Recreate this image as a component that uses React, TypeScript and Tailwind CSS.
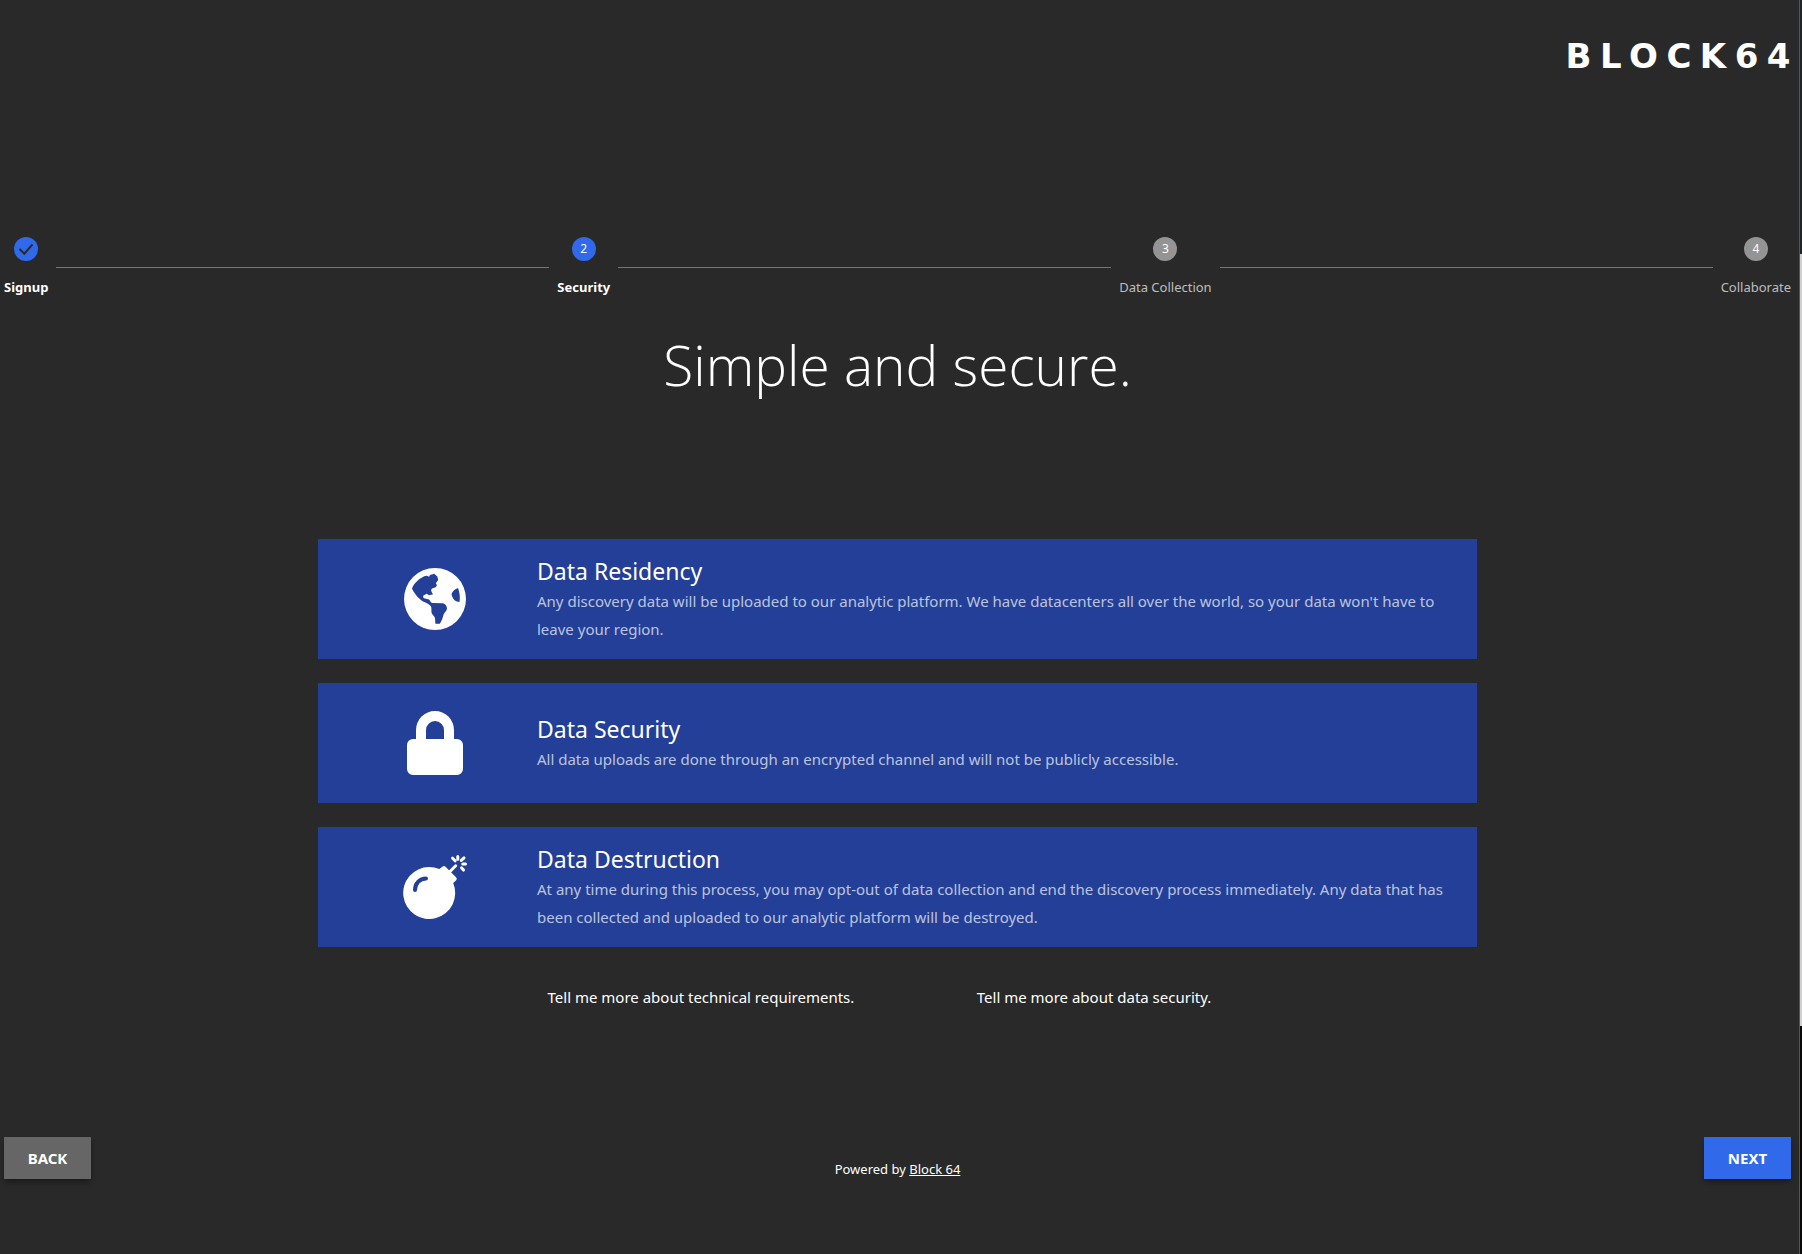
import { Fragment, useState } from "react";

type IconProps = {
  className?: string;
};

function GlobeIcon({ className }: IconProps) {
  return (
    <svg viewBox="0 0 62 62" className={className} fill="currentColor" aria-hidden="true">
      <path
        fillRule="evenodd"
        d="M31 0a31 31 0 1 0 0 62a31 31 0 1 0 0-62Z
        M8 20.700C9 17 11 15 13.500 12.800C16.500 10 19.500 8.300 22.600 7.800L25.300 8.800C25.500 7 26.500 6.300 28 6.500L30.200 5.800L33.300 8.400C33.400 10 34.500 10.500 34 12.300L31.800 15.300L33 17.200L31.600 19.300C30 20 28.200 20 27.400 21.200C26.600 22.500 27.800 24.500 29.100 26.200L25 27.200L22.800 25.800L19.400 27.500C18.600 29.200 19.500 30.400 21 30.400L25 31.500C26.500 32.500 26.200 34.500 28 34.900L39 35.200C41.500 36 43 38 43 40.800C42.400 43.500 40.600 44.500 39.600 46.500C38.800 50 37.500 53.500 35.800 55.700H31.400L31 50C30.200 47.800 28 46.500 27.500 44.500L27.300 39.300C26.600 37.200 25 36.200 22.500 34.900C16.500 32.800 12 28.200 8 20.700Z
        M54 20C51 20.800 48.700 23.200 47.500 26.300C48 29.500 50 32.500 52.800 33.600L55.500 33.900C56.400 29 55.500 24 54 20Z"
      />
    </svg>
  );
}

function LockIcon({ className }: IconProps) {
  return (
    <svg viewBox="0 0 64 64" className={className} fill="currentColor" aria-hidden="true">
      <path d="M13 28V19a19 19 0 0 1 38 0v9h3a6 6 0 0 1 6 6v24a6 6 0 0 1-6 6H10a6 6 0 0 1-6-6V34a6 6 0 0 1 6-6ZM23 28H41V19a9 9 0 0 0-18 0Z" />
    </svg>
  );
}

function BombIcon({ className }: IconProps) {
  return (
    <svg viewBox="0 0 64 64" className={className} fill="none" aria-hidden="true">
      <path
        fill="currentColor"
        d="M26 12c3.700 0 7.200.8 10.400 2.100l2.900-2.300a2.500 2.500 0 0 1 3.500.2l10 10a2.500 2.500 0 0 1 .2 3.500L50.200 28A26 26 0 1 1 26 12Z"
      />
      <path d="M12 35c0-6.500 4.500-11.500 11-11.500" className="stroke-[#233f97]" strokeWidth="4" strokeLinecap="round" />
      <path
        stroke="currentColor"
        strokeWidth="3"
        strokeLinecap="round"
        d="M45.500 18l7.200-7.200M54.800 1.500v2.800M61 2.900l-2.700 2.500M59.800 9h2.700M58.500 12.800l2 2.300M49.600 3.200l2.500 2.600"
      />
    </svg>
  );
}

const steps = ["Signup", "Security", "Data Collection", "Collaborate"];

const features = [
  {
    title: "Data Residency",
    text: "Any discovery data will be uploaded to our analytic platform. We have datacenters all over the world, so your data won't have to leave your region.",
    icon: <GlobeIcon className="size-[62px]" />,
  },
  {
    title: "Data Security",
    text: "All data uploads are done through an encrypted channel and will not be publicly accessible.",
    icon: <LockIcon className="size-16" />,
  },
  {
    title: "Data Destruction",
    text: "At any time during this process, you may opt-out of data collection and end the discovery process immediately. Any data that has been collected and uploaded to our analytic platform will be destroyed.",
    icon: <BombIcon className="size-16" />,
  },
];

function Stepper({ current }: { current: number }) {
  return (
    <ol className="flex items-center gap-2">
      {steps.map((label, index) => (
        <Fragment key={label}>
          {index > 0 ? <li aria-hidden="true" className="h-px flex-1 bg-[#757575]" /> : null}
          <li className="flex flex-col items-center gap-4">
            <span
              className={
                index <= current
                  ? "flex size-6 items-center justify-center rounded-full bg-[#3069ea] text-xs"
                  : "flex size-6 items-center justify-center rounded-full bg-[#949494] text-xs"
              }
            >
              {index < current ? (
                <svg viewBox="0 0 24 24" className="size-6" fill="none" aria-label="Done">
                  <path d="M5.500 12l4.800 4.700L18.500 7.300" className="stroke-[#292929]" strokeWidth="2" />
                </svg>
              ) : (
                index + 1
              )}
            </span>
            <span
              className={
                index <= current ? "text-[13px] leading-5 font-bold" : "text-[13px] leading-5 text-white/70"
              }
            >
              {label}
            </span>
          </li>
        </Fragment>
      ))}
    </ol>
  );
}

export default function App() {
  const [current, setCurrent] = useState(1);

  return (
    <div className="flex min-h-screen bg-[#292929] font-['Noto_Sans','Open_Sans',sans-serif] text-white">
      <div className="flex flex-1 flex-col pr-2 pl-1">
        <header className="flex h-[237px] justify-end pt-9">
          <a
            href="#home"
            className="-mr-2 h-10 font-['DejaVu_Sans',sans-serif] text-[34px] leading-10 font-bold tracking-[0.25em]"
          >
            BLOCK64
          </a>
        </header>

        <Stepper current={current} />

        <main className="flex flex-col items-center">
          <h1 className="mt-6 font-['Open_Sans','Noto_Sans',sans-serif] text-[55px] leading-[88px] font-light">
            Simple and secure.
          </h1>

          <div className="mt-[130px] flex w-full max-w-[1159px] flex-col gap-6">
            {features.map((feature) => (
              <section key={feature.title} className="flex min-h-[120px] items-center bg-[#233f97] pr-5 pl-[85px]">
                <div className="flex w-16 shrink-0 justify-center">{feature.icon}</div>
                <div className="ml-[70px]">
                  <h2 className="text-[23px] leading-8">{feature.title}</h2>
                  <p className="text-[15px] leading-7 text-white/70">{feature.text}</p>
                </div>
              </section>
            ))}
          </div>

          <nav className="mt-9 grid w-[44%] grid-cols-2 text-center text-[15px] leading-7">
            <a href="#requirements">Tell me more about technical requirements.</a>
            <a href="#security">Tell me more about data security.</a>
          </nav>
        </main>

        <footer className="mt-[126px] flex items-start justify-between">
          <button
            type="button"
            onClick={() => setCurrent((step) => Math.max(step - 1, 0))}
            className="h-[42px] w-[87px] bg-[#666666] text-[15px] font-bold shadow-md shadow-black/30"
          >
            BACK
          </button>
          <p className="mt-[22px] text-[13px] leading-5">
            Powered by{" "}
            <a href="#block64" className="underline">
              Block 64
            </a>
          </p>
          <button
            type="button"
            onClick={() => setCurrent((step) => Math.min(step + 1, steps.length - 1))}
            className="h-[42px] w-[87px] bg-[#3069ea] text-[15px] font-bold shadow-md shadow-black/30"
          >
            NEXT
          </button>
        </footer>
      </div>

      <div className="flex w-[3px] flex-col border-l border-[#555555]">
        <div className="h-[254px] bg-[#1c252e]" />
        <div className="h-[772px] bg-[#d0d0d0]" />
        <div className="flex-1 bg-[#08090b]" />
      </div>
    </div>
  );
}
